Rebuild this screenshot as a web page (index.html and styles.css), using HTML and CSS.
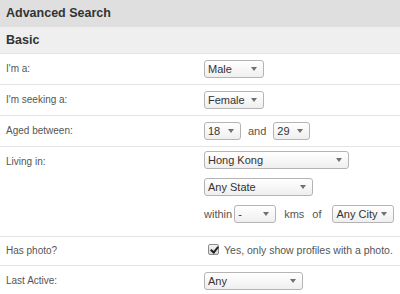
FILE: index.html
```html
<!DOCTYPE html>
<html lang="en">
<head>
<meta charset="UTF-8" />
<title>Advanced Search</title>
<link rel="stylesheet" href="styles.css">
</head>
<body>
<div class="panel">
  <div class="panel-title">Advanced Search</div>
  <div class="section-title">Basic</div>

  <div class="row">
    <label class="row-label">I'm a:</label>
    <div class="row-value">
      <span class="dropdown"><select class="w-male"><option>Male</option><option>Female</option></select></span>
    </div>
  </div>

  <div class="row">
    <label class="row-label">I'm seeking a:</label>
    <div class="row-value">
      <span class="dropdown"><select class="w-male"><option>Female</option><option>Male</option></select></span>
    </div>
  </div>

  <div class="row">
    <label class="row-label">Aged between:</label>
    <div class="row-value inline">
      <span class="dropdown"><select class="w-age"><option>18</option></select></span>
      <span class="word">and</span>
      <span class="dropdown"><select class="w-age"><option>29</option></select></span>
    </div>
  </div>

  <div class="row">
    <label class="row-label">Living in:</label>
    <div class="row-value stack">
      <span class="dropdown"><select class="w-country"><option>Hong Kong</option></select></span>
      <span class="dropdown"><select class="w-state"><option>Any State</option></select></span>
      <div class="inline">
        <span class="word">within</span>
        <span class="dropdown tight"><select class="w-dist"><option>-</option></select></span>
        <span class="word kms">kms</span>
        <span class="word of">of</span>
        <span class="dropdown"><select class="w-city"><option>Any City</option></select></span>
      </div>
    </div>
  </div>

  <div class="row row-short">
    <label class="row-label">Has photo?</label>
    <div class="row-value">
      <label class="check-label"><input type="checkbox" class="check" checked> Yes, only show profiles with a photo.</label>
    </div>
  </div>

  <div class="row">
    <label class="row-label">Last Active:</label>
    <div class="row-value">
      <span class="dropdown"><select class="w-active"><option>Any</option></select></span>
    </div>
  </div>
</div>
</body>
</html>
```

FILE: styles.css
```css
* { box-sizing: border-box; }
body {
  margin: 0;
  font-family: 'Liberation Sans', Arial, sans-serif;
  color: #444;
  background: #fff;
}
.panel {
  width: 400px;
}
.panel-title {
  height: 27px;
  line-height: 27px;
  padding-left: 6px;
  background: #dfdfdf;
  color: #333;
  font-weight: bold;
  font-size: 12.5px;
}
.section-title {
  height: 26px;
  line-height: 27px;
  padding-left: 6px;
  background: #efefef;
  color: #333;
  font-weight: bold;
  font-size: 12.5px;
}
.row {
  display: grid;
  grid-template-columns: 198px 1fr;
  align-items: start;
  padding-left: 6px;
  border-top: 1px solid #e4e4e4;
}
.row-label {
  line-height: 30px;
  font-size: 10px;
  color: #555;
}
.row-value {
  padding: 6px 0;
  font-size: 11px;
  color: #555;
}
.row-short .row-label { line-height: 28px; }
.row-short .row-value {
  padding: 0;
  height: 28px;
  display: flex;
  align-items: center;
}
.inline {
  display: flex;
  align-items: center;
  gap: 7px;
}
.stack {
  display: flex;
  flex-direction: column;
  align-items: flex-start;
  gap: 9px;
  padding: 4px 0 13px;
}
.stack .inline { gap: 0; }
.word {
  font-size: 11px;
  color: #555;
}
.tight { margin-left: 2px; }
.kms { margin-left: 8px; }
.of { margin-left: 8px; margin-right: 11px; }
.dropdown {
  position: relative;
  display: inline-block;
  height: 18px;
}
.dropdown select {
  appearance: none;
  -webkit-appearance: none;
  height: 18px;
  margin: 0;
  padding: 0 3px;
  border: 1px solid #b4b4b4;
  border-radius: 3px;
  background: linear-gradient(#ffffff, #efefef);
  font-family: 'Liberation Sans', Arial, sans-serif;
  font-size: 11px;
  color: #333;
  display: block;
}
.dropdown::after {
  content: "";
  position: absolute;
  right: 7px;
  top: 7px;
  border-left: 3.5px solid transparent;
  border-right: 3.5px solid transparent;
  border-top: 4px solid #707070;
  pointer-events: none;
}
.w-male { width: 60px; }
.w-age { width: 37px; }
.w-country { width: 145px; }
.w-state { width: 109px; }
.w-dist { width: 42px; }
.w-city { width: 62px; }
.w-active { width: 99px; }
.check-label {
  display: flex;
  align-items: center;
  font-size: 10.5px;
  color: #555;
  margin-left: 4px;
  margin-top: -3px;
}
.check {
  appearance: none;
  -webkit-appearance: none;
  position: relative;
  width: 11px;
  height: 11px;
  margin: 0 5px 0 0;
  border: 1px solid #8c8c8c;
  border-radius: 2px;
  background: linear-gradient(#f4f4f4, #d8d8d8);
}
.check:checked::after {
  content: "";
  position: absolute;
  left: 3px;
  top: 0;
  width: 3px;
  height: 6px;
  border-right: 2px solid #222;
  border-bottom: 2px solid #222;
  transform: rotate(40deg);
}
```
